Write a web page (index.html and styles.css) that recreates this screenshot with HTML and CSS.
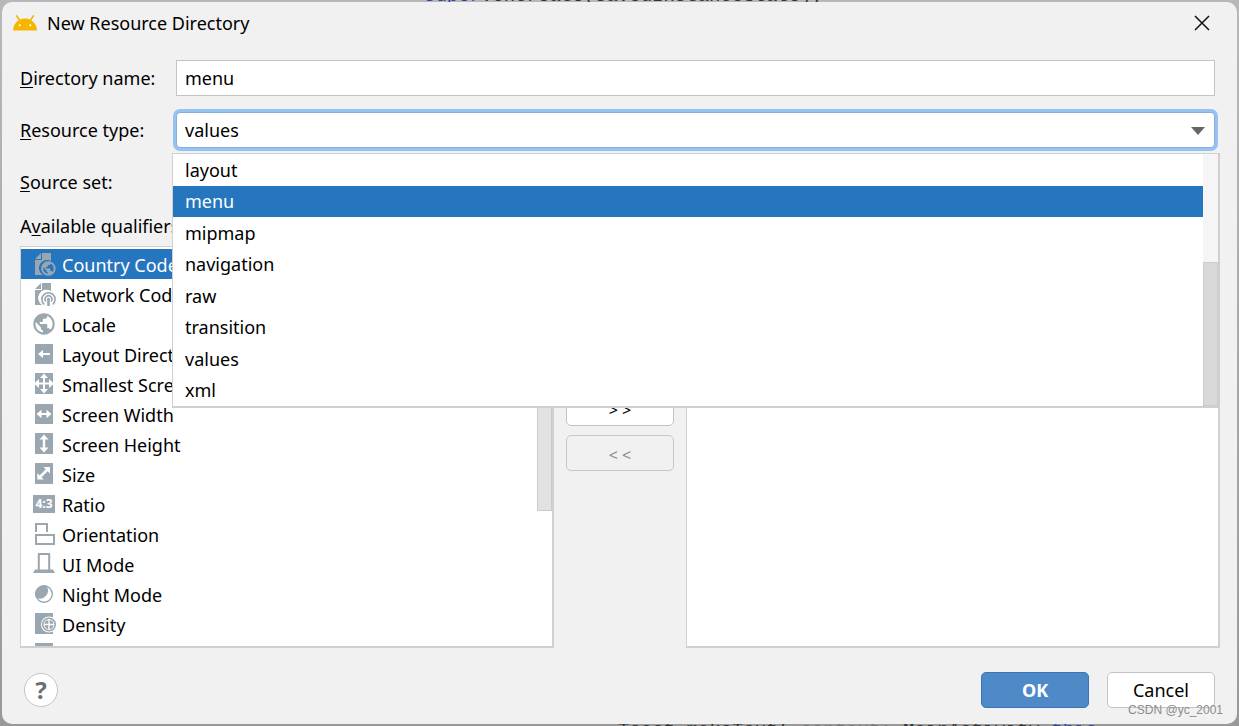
FILE: index.html
```
<!DOCTYPE html>
<html lang="en">
<head>
  <meta charset="UTF-8" />
  <meta name="viewport" content="width=device-width, initial-scale=1.0"/>
  <title>New Resource Directory</title>
  <link rel="stylesheet" href="styles.css">
</head>
<body>
  <!-- editor lines that peek out around the dialog -->
  <div class="code code-top"><b>super</b>.onCreate(savedInstanceState);</div>
  <div class="code code-bottom">Toast.makeText( <i>context:</i> MainActivity.<b>this</b></div>

  <main class="dialog">
    <header class="title-bar">
      <svg class="logo" viewBox="0 0 24 16">
        <path d="M0 15.500C.4 9.500 4.500 3.500 12 3.500S23.600 9.500 24 15.500z" fill="#f6b500"/>
        <path d="M6.500 5L3.500.8M17.500 5L20.500.8" stroke="#f6b500" stroke-width="1.500" stroke-linecap="round"/>
        <circle cx="6.700" cy="10.300" r="1" fill="#fff"/>
        <circle cx="17.300" cy="10.300" r="1" fill="#fff"/>
      </svg>
      <h1>New Resource Directory</h1>
      <button class="close" type="button" aria-label="Close">
        <svg viewBox="0 0 16 16"><path d="M1 1l14 14M15 1L1 15" stroke="#111" stroke-width="1.500"/></svg>
      </button>
    </header>

    <form class="content">
      <div class="field">
        <label for="dirName"><u>D</u>irectory name:</label>
        <input type="text" id="dirName" value="menu" />
      </div>
      <div class="field">
        <label for="resType"><u>R</u>esource type:</label>
        <div class="combo">
          <select id="resType">
            <option>layout</option>
            <option>menu</option>
            <option>mipmap</option>
            <option>navigation</option>
            <option>raw</option>
            <option>transition</option>
            <option selected>values</option>
            <option>xml</option>
          </select>
          <svg class="arrow" viewBox="0 0 14 8"><path d="M0 0h14L7 8z" fill="#666"/></svg>
          <div class="popup">
            <ul>
              <li>layout</li>
              <li class="active">menu</li>
              <li>mipmap</li>
              <li>navigation</li>
              <li>raw</li>
              <li>transition</li>
              <li>values</li>
              <li>xml</li>
            </ul>
            <div class="track"><div class="thumb"></div></div>
          </div>
        </div>
      </div>
      <div class="field source">
        <span><u>S</u>ource set:</span>
      </div>
      <div class="list-label">A<u>v</u>ailable qualifiers:</div>

      <div class="lists">
        <div class="list">
          <ul>
            <li class="active">
              <svg viewBox="0 0 24 24"><path class="f" d="M3 6L9 0V6zM10 0h9v8a8 8 0 0 0-8 14H3V7h7z"/><g transform="translate(8.500 7.500) scale(.66)"><path class="f" d="M12 1C6 1 1 6 1 12s5 11 11 11 11-5 11-11S18 1 12 1zm-1 18.900c-4-.5-7-3.900-7-7.900 0-.6.100-1.200.200-1.800L9 15v1c0 1.100.9 2 2 2zm6.900-2.500c-.3-.8-1-1.400-1.900-1.400h-1v-3c0-.6-.4-1-1-1H8v-2h2c.6 0 1-.4 1-1V7h2c1.100 0 2-.9 2-2v-.4c2.900 1.200 5 4.100 5 7.400 0 2.100-.8 4-2.100 5.400z"/></g></svg>
              Country Code</li>
            <li>
              <svg viewBox="0 0 24 24"><path class="f" d="M3 6L9 0V6zM10 0h9v8a8 8 0 0 0-9 14H3V7h7z"/><path class="s" d="M12.300 21.500A6.600 6.600 0 1 1 20.700 21.500M14 18.500a3.400 3.400 0 1 1 5 0" stroke-width="1.600"/><path class="f" d="M15.200 17a1.500 1.500 0 1 1 2.600 0V23h-2.600z"/></svg>
              Network Code</li>
            <li>
              <svg viewBox="0 0 24 24"><g transform="translate(-.8 -1.800) scale(1.070)"><path class="f" d="M12 2C6.500 2 2 6.500 2 12s4.500 10 10 10 10-4.500 10-10S17.500 2 12 2zm-1 17.900c-4-.5-7-3.900-7-7.900 0-.6.100-1.200.200-1.800L9 15v1c0 1.100.9 2 2 2zm6.900-2.500c-.3-.8-1-1.400-1.900-1.400h-1v-3c0-.6-.4-1-1-1H8v-2h2c.6 0 1-.4 1-1V7h2c1.100 0 2-.9 2-2v-.4c2.900 1.200 5 4.100 5 7.400 0 2.100-.8 4-2.100 5.400z"/></g></svg>
              Locale</li>
            <li>
              <svg viewBox="0 0 24 24"><path class="f" d="M3 1h18v20H3z"/><path class="w" d="M6 11l5-4v3h7v2h-7v3z"/></svg>
              Layout Direction</li>
            <li>
              <svg viewBox="0 0 24 24"><path class="f" d="M3 0h18v21H3z"/><path class="w" d="M12 .5L16 5H13v4.500h4V6l5 4.500-5 4.500v-3.500h-4V16h3l-4 4.500L8 16h3v-4.500H7V15l-5-4.500L7 6v3.500h4V5H8z"/></svg>
              Smallest Screen Width</li>
            <li>
              <svg viewBox="0 0 24 24"><path class="f" d="M3 1h18v20H3z"/><path class="w" d="M4.500 11l5-4.300V10h5V6.700l5 4.300-5 4.300V12h-5v3.300z"/></svg>
              Screen Width</li>
            <li>
              <svg viewBox="0 0 24 24"><path class="f" d="M3 0h18v21H3z"/><path class="w" d="M12 1.500l4.500 5H13.200v8h3.300l-4.500 5-4.500-5h3.300v-8H7.500z"/></svg>
              Screen Height</li>
            <li>
              <svg viewBox="0 0 24 24"><path class="f" d="M3 0h18v21H3z"/><path class="w" d="M11.500 4H18v6.500l-2.300-2.300-6.200 6.100 2.300 2.300H5.300v-6.500l2.300 2.300L13.800 6.300z"/></svg>
              Size</li>
            <li>
              <svg viewBox="0 0 24 24"><path class="f" d="M1 2h22v18H1z"/><text class="w ratio" x="12" y="15" text-anchor="middle">4:3</text></svg>
              Ratio</li>
            <li>
              <svg viewBox="0 0 24 24"><path class="s" d="M4 9V1h11v8" stroke-width="2"/><path class="s" d="M4 12h18v9H4z" stroke-width="2"/></svg>
              Orientation</li>
            <li>
              <svg viewBox="0 0 24 24"><path class="s" d="M6.800 17V1h10.400V17" stroke-width="2"/><path class="f" d="M1 20L3 16.500h18L23 20z"/></svg>
              UI Mode</li>
            <li>
              <svg viewBox="0 0 24 24"><circle class="s" cx="12" cy="11" r="8.300" stroke-width="1.400"/><path class="f" d="M14.500 3A8 8 0 0 1 4 14.500 8.500 8.500 0 0 1 14.500 3z"/></svg>
              Night Mode</li>
            <li>
              <svg viewBox="0 0 24 24"><path class="f" d="M3 0h18v21H3z"/><circle class="w" cx="17" cy="11.500" r="8"/><circle class="f" cx="17" cy="11.500" r="7"/><circle class="w" cx="17" cy="11.500" r="5.400"/><path class="f" d="M16.300 7v3.800h-3.800A4.500 4.500 0 0 1 16.300 7zM17.700 7a4.500 4.500 0 0 1 3.800 3.800h-3.800zM12.500 12.200h3.800V16a4.500 4.500 0 0 1-3.800-3.800zM17.700 12.200h3.800a4.500 4.500 0 0 1-3.800 3.800z"/></svg>
              Density</li>
            <li>
              <svg viewBox="0 0 24 24"><path class="f" d="M3 0h18v21H3z"/></svg>
            </li>
          </ul>
          <div class="track"><div class="thumb"></div></div>
        </div>
        <div class="moves">
          <button type="button">&gt; &gt;</button>
          <button type="button" disabled>&lt; &lt;</button>
        </div>
        <div class="list"></div>
      </div>

      <footer class="actions">
        <button class="help" type="button">?</button>
        <button class="ok" type="submit">OK</button>
        <button type="button">Cancel</button>
      </footer>
    </form>
  </main>
  <div class="watermark">CSDN @yc_2001</div>
</body>
</html>
```

FILE: styles.css
```
* {
  box-sizing: border-box;
}
body {
  margin: 0;
  padding: 2px;
  height: 100vh;
  position: relative;
  overflow: hidden;
  background: linear-gradient(#b8b8b8, #999);
  color: #000;
  font-family: "Noto Sans", "Open Sans", sans-serif;
  font-size: 18px;
  line-height: 24px;
}
ul {
  list-style: none;
  margin: 0;
  padding: 0;
}
button, input, select {
  font: inherit;
  color: inherit;
}
.code {
  position: absolute;
  font-family: "Liberation Mono", monospace;
  font-size: 19px;
  white-space: pre;
  color: #333;
}
.code b {
  font-weight: normal;
  color: #2a459c;
}
.code i {
  font-style: normal;
  color: #777;
}
.code-top {
  left: 424px;
  top: -16px;
}
.code-bottom {
  left: 618px;
  bottom: -16px;
}
.dialog {
  position: relative;
  height: 100%;
  display: flex;
  flex-direction: column;
  border-radius: 10px;
  background: #f1f1f1;
}
.title-bar {
  display: flex;
  align-items: center;
  height: 42px;
  padding: 0 27px 0 11px;
}
.logo {
  width: 24px;
  height: 16px;
}
.title-bar h1 {
  flex: 1;
  margin: 0 0 0 10px;
  font-size: 18px;
  font-weight: normal;
}
.close {
  display: flex;
  padding: 0;
  border: none;
  background: none;
}
.close svg {
  width: 16px;
  height: 16px;
}
.content {
  flex: 1;
  min-height: 0;
  display: flex;
  flex-direction: column;
  padding: 16px 17px 16px 18px;
}
.field {
  display: grid;
  grid-template-columns: 156px 1fr;
  align-items: center;
  height: 36px;
  margin: 0 5px 16px 0;
}
u {
  text-underline-offset: 2px;
}
input, select {
  width: 100%;
  height: 36px;
  padding: 0 8px;
  border: 1px solid #c4c4c4;
  background: #fff;
  outline: none;
}
.combo {
  position: relative;
}
select {
  display: block;
  appearance: none;
  border-color: #87afda;
  border-radius: 4px;
  box-shadow: 0 0 0 3px #97c3f3;
}
.arrow {
  position: absolute;
  right: 10px;
  top: 15px;
  width: 14px;
  height: 8px;
}
.popup {
  position: absolute;
  left: -4px;
  right: -5px;
  top: 41px;
  height: 255px;
  z-index: 1;
  display: flex;
  border: 1px solid #d0d0d0;
  border-width: 1px 2px 2px 1px;
  background: #fff;
}
.popup ul {
  flex: 1;
  display: grid;
}
.popup li {
  display: flex;
  align-items: center;
  padding-left: 12px;
}
.active {
  background: #2675bf;
  color: #fff;
}
.track {
  width: 15px;
  display: flex;
  flex-direction: column;
  background: #f5f5f5;
}
.thumb {
  border: 1px solid #cbcbcb;
  background: #d9d9d9;
}
.popup .track {
  justify-content: flex-end;
}
.popup .thumb {
  height: 144px;
}
.field.source {
  margin-bottom: 14px;
}
.list-label {
  margin-bottom: 8px;
}
.lists {
  flex: 1;
  min-height: 0;
  display: grid;
  grid-template-columns: 1fr 108px 1fr;
  gap: 12px;
}
.list {
  display: flex;
  min-height: 0;
  overflow: hidden;
  border: 1px solid #d0d0d0;
  border-width: 1px 2px 2px 1px;
  background: #fff;
}
.list ul {
  flex: 1;
  padding-top: 2px;
}
.list li {
  display: flex;
  align-items: center;
  gap: 6px;
  height: 30px;
  padding: 2px 0 0 11px;
}
.list li svg {
  flex: none;
  width: 24px;
  height: 24px;
}
.f {
  fill: #9aa7b0;
}
.s {
  fill: none;
  stroke: #9aa7b0;
}
.w {
  fill: #fff;
}
.ratio {
  font-size: 12px;
  font-weight: bold;
}
.list .track {
  background: #fff;
}
.list .thumb {
  height: 264px;
  background: #e2e2e2;
}
.moves {
  display: flex;
  flex-direction: column;
  gap: 9px;
  padding-top: 144px;
}
.moves button, .actions button {
  height: 36px;
  border: 1px solid #c4c4c4;
  border-radius: 5px;
  background: #fff;
}
.moves button {
  padding-top: 4px;
  font-size: 16px;
}
.moves button:disabled {
  border-color: #c8c8c8;
  background: #f1f1f1;
  color: #8c8c8c;
}
.actions {
  display: flex;
  align-items: center;
  gap: 18px;
  padding: 24px 5px 0 4px;
}
.actions button {
  width: 108px;
}
.actions .help {
  width: 34px;
  height: 34px;
  margin-right: auto;
  padding: 0;
  border-radius: 50%;
  color: #6e6e6e;
  font-size: 24px;
  font-weight: bold;
}
.actions .ok {
  border-color: #3b75b5;
  background: #4e8ac8;
  color: #fff;
  font-weight: bold;
}
.watermark {
  position: absolute;
  right: 16px;
  bottom: 8px;
  font: 12px/16px "Liberation Sans", sans-serif;
  color: #8c8c8c;
}
```
